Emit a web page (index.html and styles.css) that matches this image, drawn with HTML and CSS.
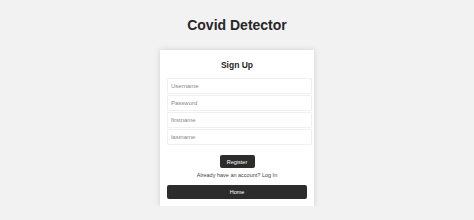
FILE: index.html
```html
<!DOCTYPE html>
<html>
  <head>
    <meta charset="UTF-8">
    <title>Covid Detector</title>
    <link rel="stylesheet" href="styles.css">
  </head>
  <body>
    <h1 class="page-title">Covid Detector</h1>

    <section class="signup">
      <h2 class="signup__title">Sign Up</h2>
      <form class="signup__form">
        <input class="signup__input" type="text" placeholder="Username">
        <input class="signup__input" type="password" placeholder="Password">
        <input class="signup__input" type="text" placeholder="firstname">
        <input class="signup__input" type="text" placeholder="lastname">
        <button class="signup__register" type="button">Register</button>
      </form>
      <p class="signup__login">Already have an account? Log In</p>
      <button class="signup__home" type="button">Home</button>
    </section>
  </body>
</html>
```

FILE: styles.css
```css
* {
  box-sizing: border-box;
}
body {
  margin: 0;
  background-color: #f2f2f2;
  font-family: "Liberation Sans", Arial, Helvetica, sans-serif;
  color: #222;
}

.page-title {
  margin: 0;
  padding-top: 16px;
  height: 50px;
  font-size: 14px;
  line-height: 18px;
  text-align: center;
  color: #262626;
}

.signup {
  width: 154px;
  margin: 0 auto;
  background-color: #fff;
  box-shadow: 0 0 6px rgba(0,0,0,0.14);
  padding: 9px 7px 7px;
}
.signup__title {
  margin: 0 0 7px;
  font-size: 8.5px;
  line-height: 12px;
  text-align: center;
  color: #262626;
}
.signup__form {
  display: flex;
  flex-direction: column;
  align-items: center;
}
.signup__input {
  align-self: flex-start;
  width: 145px;
  height: 16px;
  margin: 0 0 1px;
  padding: 0 3px;
  border: solid 1px #f0f0f0;
  border-radius: 1px;
  font-family: inherit;
  font-size: 6px;
  color: #333;
  outline: none;
}
.signup__input::placeholder {
  color: #888;
}
.signup__register {
  margin-top: 9px;
  width: 35px;
  height: 13px;
  padding: 0;
  border: none;
  border-radius: 2px;
  background-color: #2c2c2c;
  color: #fff;
  font-family: inherit;
  font-size: 5.5px;
}
.signup__login {
  margin: 2px 0 5px;
  font-size: 5.5px;
  line-height: 10px;
  text-align: center;
  color: #444;
}
.signup__home {
  display: block;
  width: 140px;
  height: 14px;
  padding: 0;
  border: none;
  border-radius: 2px;
  background-color: #2c2c2c;
  color: #fff;
  font-family: inherit;
  font-size: 5.5px;
}
```
